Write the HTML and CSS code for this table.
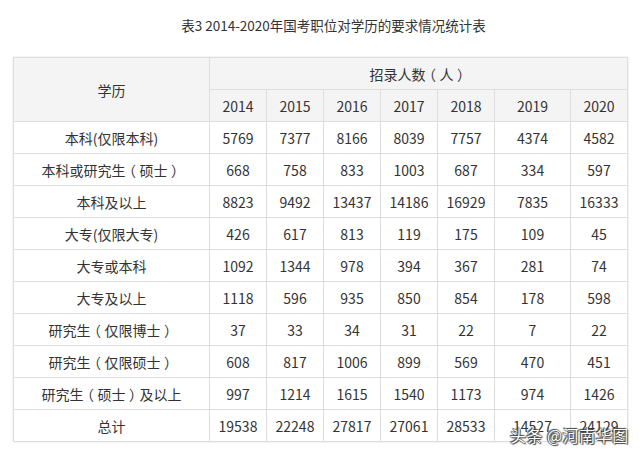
FILE: index.html
```html
<!DOCTYPE html>
<html lang="zh">
<head>
<meta charset="utf-8">
<link rel="stylesheet" href="styles.css">
</head>
<body>
<div class="page">
  <h1 class="title">表3 2014-2020年国考职位对学历的要求情况统计表</h1>
  <table class="stats">
    <colgroup>
      <col class="c-label"><col class="c-y"><col class="c-y"><col class="c-y"><col class="c-y"><col class="c-y"><col class="c-wide"><col class="c-y">
    </colgroup>
    <thead>
      <tr><th rowspan="2">学历</th><th colspan="7">招录人数<span class="p">（</span>人<span class="p">）</span></th></tr>
      <tr><td>2014</td><td>2015</td><td>2016</td><td>2017</td><td>2018</td><td>2019</td><td>2020</td></tr>
    </thead>
    <tbody>
      <tr><td>本科(仅限本科)</td><td>5769</td><td>7377</td><td>8166</td><td>8039</td><td>7757</td><td>4374</td><td>4582</td></tr>
      <tr><td>本科或研究生<span class="p">（</span>硕士<span class="p">）</span></td><td>668</td><td>758</td><td>833</td><td>1003</td><td>687</td><td>334</td><td>597</td></tr>
      <tr><td>本科及以上</td><td>8823</td><td>9492</td><td>13437</td><td>14186</td><td>16929</td><td>7835</td><td>16333</td></tr>
      <tr><td>大专(仅限大专)</td><td>426</td><td>617</td><td>813</td><td>119</td><td>175</td><td>109</td><td>45</td></tr>
      <tr><td>大专或本科</td><td>1092</td><td>1344</td><td>978</td><td>394</td><td>367</td><td>281</td><td>74</td></tr>
      <tr><td>大专及以上</td><td>1118</td><td>596</td><td>935</td><td>850</td><td>854</td><td>178</td><td>598</td></tr>
      <tr><td>研究生<span class="p">（</span>仅限博士<span class="p">）</span></td><td>37</td><td>33</td><td>34</td><td>31</td><td>22</td><td>7</td><td>22</td></tr>
      <tr><td>研究生<span class="p">（</span>仅限硕士<span class="p">）</span></td><td>608</td><td>817</td><td>1006</td><td>899</td><td>569</td><td>470</td><td>451</td></tr>
      <tr><td>研究生<span class="p">（</span>硕士<span class="p">）</span>及以上</td><td>997</td><td>1214</td><td>1615</td><td>1540</td><td>1173</td><td>974</td><td>1426</td></tr>
      <tr><td>总计</td><td>19538</td><td>22248</td><td>27817</td><td>27061</td><td>28533</td><td>14527</td><td>24129</td></tr>
    </tbody>
  </table>
  <div class="watermark">头条 @河南华图</div>
</div>
</body>
</html>
```
FILE: styles.css
```css
html, body {
  margin: 0;
  padding: 0;
  background: #fff;
}
.page {
  position: relative;
  width: 640px;
  height: 455px;
  font-family: "Noto Sans CJK SC", "Noto Sans", sans-serif;
  color: #333;
}
.title {
  margin: 0;
  padding: 15px 0 0 27px;
  height: 42px;
  box-sizing: border-box;
  text-align: center;
  font-size: 13.5px;
  font-weight: normal;
  line-height: 20px;
  color: #333;
}
.stats {
  margin: 15px 0 0 13px;
  border-collapse: collapse;
  table-layout: fixed;
  width: 614px;
  font-size: 14px;
  box-shadow: 0 0 2px rgba(0,0,0,0.12);
}
.c-label { width: 196px; }
.c-y { width: 57px; }
.c-wide { width: 76px; }
.stats th, .stats td {
  border: 1px solid #dedede;
  text-align: center;
  padding: 0;
  height: 31px;
  font-weight: normal;
  line-height: 20px;
  white-space: nowrap;
}
.stats thead th, .stats thead td {
  background: #f4f4f4;
}
.p {
  display: inline-block;
  font-feature-settings: "halt" 1;
  padding: 0 3.5px;
}
.watermark {
  position: absolute;
  left: 510px;
  top: 425px;
  font-size: 16px;
  line-height: 20px;
  color: #fff;
  letter-spacing: 0.5px;
  text-shadow: 0 0 1px #333, 0 0 1px #333, 1px 1px 1px #444, -1px -1px 1px #444;
}
```
